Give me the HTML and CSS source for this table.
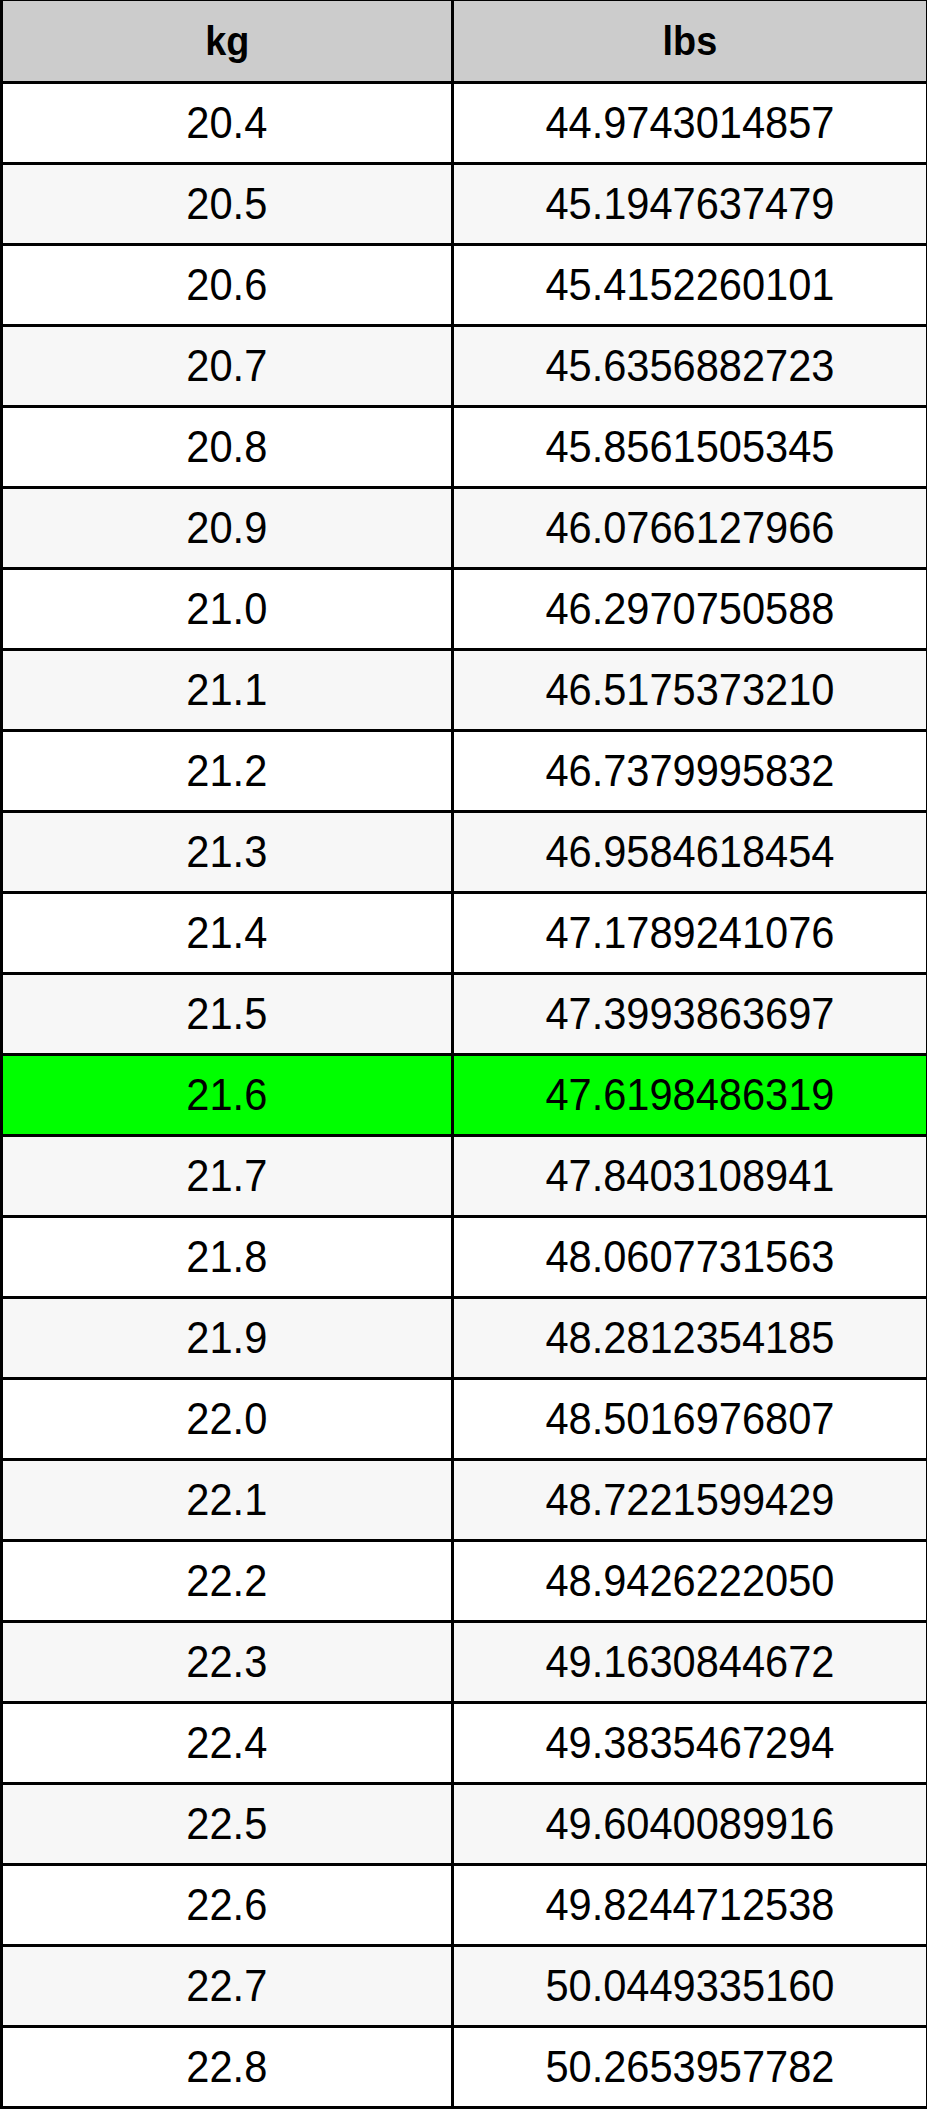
FILE: index.html
```html
<!DOCTYPE html>
<html>
<head>
<meta charset="utf-8">
<link rel="stylesheet" href="styles.css">
</head>
<body>
<div class="table" role="table">
  <div class="row head" role="row"><div class="cell" role="columnheader"><span>kg</span></div><div class="cell" role="columnheader"><span>lbs</span></div></div>
  <div class="row" role="row"><div class="cell"><span>20.4</span></div><div class="cell"><span>44.9743014857</span></div></div>
  <div class="row alt" role="row"><div class="cell"><span>20.5</span></div><div class="cell"><span>45.1947637479</span></div></div>
  <div class="row" role="row"><div class="cell"><span>20.6</span></div><div class="cell"><span>45.4152260101</span></div></div>
  <div class="row alt" role="row"><div class="cell"><span>20.7</span></div><div class="cell"><span>45.6356882723</span></div></div>
  <div class="row" role="row"><div class="cell"><span>20.8</span></div><div class="cell"><span>45.8561505345</span></div></div>
  <div class="row alt" role="row"><div class="cell"><span>20.9</span></div><div class="cell"><span>46.0766127966</span></div></div>
  <div class="row" role="row"><div class="cell"><span>21.0</span></div><div class="cell"><span>46.2970750588</span></div></div>
  <div class="row alt" role="row"><div class="cell"><span>21.1</span></div><div class="cell"><span>46.5175373210</span></div></div>
  <div class="row" role="row"><div class="cell"><span>21.2</span></div><div class="cell"><span>46.7379995832</span></div></div>
  <div class="row alt" role="row"><div class="cell"><span>21.3</span></div><div class="cell"><span>46.9584618454</span></div></div>
  <div class="row" role="row"><div class="cell"><span>21.4</span></div><div class="cell"><span>47.1789241076</span></div></div>
  <div class="row alt" role="row"><div class="cell"><span>21.5</span></div><div class="cell"><span>47.3993863697</span></div></div>
  <div class="row hl" role="row"><div class="cell"><span>21.6</span></div><div class="cell"><span>47.6198486319</span></div></div>
  <div class="row alt" role="row"><div class="cell"><span>21.7</span></div><div class="cell"><span>47.8403108941</span></div></div>
  <div class="row" role="row"><div class="cell"><span>21.8</span></div><div class="cell"><span>48.0607731563</span></div></div>
  <div class="row alt" role="row"><div class="cell"><span>21.9</span></div><div class="cell"><span>48.2812354185</span></div></div>
  <div class="row" role="row"><div class="cell"><span>22.0</span></div><div class="cell"><span>48.5016976807</span></div></div>
  <div class="row alt" role="row"><div class="cell"><span>22.1</span></div><div class="cell"><span>48.7221599429</span></div></div>
  <div class="row" role="row"><div class="cell"><span>22.2</span></div><div class="cell"><span>48.9426222050</span></div></div>
  <div class="row alt" role="row"><div class="cell"><span>22.3</span></div><div class="cell"><span>49.1630844672</span></div></div>
  <div class="row" role="row"><div class="cell"><span>22.4</span></div><div class="cell"><span>49.3835467294</span></div></div>
  <div class="row alt" role="row"><div class="cell"><span>22.5</span></div><div class="cell"><span>49.6040089916</span></div></div>
  <div class="row" role="row"><div class="cell"><span>22.6</span></div><div class="cell"><span>49.8244712538</span></div></div>
  <div class="row alt" role="row"><div class="cell"><span>22.7</span></div><div class="cell"><span>50.0449335160</span></div></div>
  <div class="row" role="row"><div class="cell"><span>22.8</span></div><div class="cell"><span>50.2653957782</span></div></div>
</div>
</body>
</html>
```
FILE: styles.css
```css
html, body {
  margin: 0;
  padding: 0;
  background: #ffffff;
}
body {
  font-family: "Liberation Sans", Arial, sans-serif;
  color: #000;
}
.table {
  display: grid;
  grid-template-columns: 448px 472px;
  grid-template-rows: 80px;
  grid-auto-rows: 78px;
  gap: 3px;
  background: #000;
  padding: 1px 4px 3px 3px;
  width: 920px;
}
.row {
  display: contents;
}
.cell {
  background: #ffffff;
  display: flex;
  align-items: center;
  justify-content: center;
  font-size: 44px;
  line-height: 1;
}
.cell span {
  display: inline-block;
  transform: scaleX(0.945);
}
.row.alt .cell {
  background: #f7f7f7;
}
.row.hl .cell {
  background: #00ff00;
}
.row.head .cell {
  background: #cccccc;
  font-weight: bold;
  font-size: 40px;
}
```
